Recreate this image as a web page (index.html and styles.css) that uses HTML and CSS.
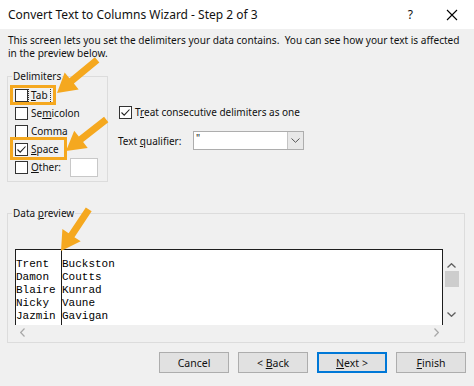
FILE: index.html
```html
<!doctype html>
<html lang="en">
<head>
    <meta charset="UTF-8">
    <title>Convert Text to Columns Wizard - Step 2 of 3</title>
    <link rel="stylesheet" href="styles.css">
</head>
<body>
<div class="window">
    <div class="titlebar">
        <span class="title">Convert Text to Columns Wizard - Step 2 of 3</span>
        <span class="help">?</span>
        <svg class="close" width="12" height="12" viewBox="0 0 12 12"><path d="M1 1L11 11M11 1L1 11" stroke="#000" stroke-width="1.1"/></svg>
    </div>

    <div class="body">
        <p class="intro">This screen lets you set the delimiters your data contains.&nbsp; You can see how your text is affected<br>in the preview below.</p>

        <div class="options">
            <div class="group delims">
                <span class="legend">Delimiters</span>
                <div class="row"><span class="box"></span><span class="focus"><u>T</u>ab</span></div>
                <div class="row"><span class="box"></span><span>Se<u>m</u>icolon</span></div>
                <div class="row"><span class="box"></span><span>Comma</span></div>
                <div class="row"><span class="box"><svg width="11" height="11" viewBox="0 0 11 11"><path d="M1.5 5.5L4.2 8.2L9.5 2.5" fill="none" stroke="#222" stroke-width="1.1"/></svg></span><span><u>S</u>pace</span></div>
                <div class="row"><span class="box"></span><span><u>O</u>ther:</span><span class="other"></span></div>
            </div>

            <div class="right">
                <div class="row"><span class="box"><svg width="11" height="11" viewBox="0 0 11 11"><path d="M1.5 5.5L4.2 8.2L9.5 2.5" fill="none" stroke="#222" stroke-width="1.1"/></svg></span><span>T<u>r</u>eat consecutive delimiters as one</span></div>
                <div class="qualifier">
                    <span class="qlabel">Text <u>q</u>ualifier:</span>
                    <div class="combo">
                        <span class="val">"</span>
                        <span class="drop"><svg width="9" height="5" viewBox="0 0 9 5"><path d="M0.5 0.5L4.5 4.3L8.5 0.5" fill="none" stroke="#555" stroke-width="1"/></svg></span>
                    </div>
                </div>
            </div>
        </div>

        <div class="group preview">
            <span class="legend">Data <u>p</u>review</span>
            <div class="pv-main">
                <div class="sheet">
                    <div class="col first">Trent<br>Damon<br>Blaire<br>Nicky<br>Jazmin</div>
                    <div class="col">Buckston<br>Coutts<br>Kunrad<br>Vaune<br>Gavigan</div>
                </div>
                <div class="vscroll">
                    <svg class="up" width="9" height="5" viewBox="0 0 9 5"><path d="M0.5 4.5L4.5 0.7L8.5 4.5" fill="none" stroke="#606060" stroke-width="1.3"/></svg>
                    <span class="thumb"></span>
                    <svg class="down" width="9" height="5" viewBox="0 0 9 5"><path d="M0.5 0.5L4.5 4.3L8.5 0.5" fill="none" stroke="#606060" stroke-width="1.3"/></svg>
                </div>
            </div>
            <div class="hscroll">
                <svg width="5" height="9" viewBox="0 0 5 9"><path d="M4.5 0.5L0.7 4.5L4.5 8.5" fill="none" stroke="#a8a8a8" stroke-width="1.2"/></svg>
                <svg width="5" height="9" viewBox="0 0 5 9"><path d="M0.5 0.5L4.3 4.5L0.5 8.5" fill="none" stroke="#a8a8a8" stroke-width="1.2"/></svg>
            </div>
        </div>

        <div class="buttons">
            <span class="btn"><span>Cancel</span></span>
            <span class="btn"><span>&lt; <u>B</u>ack</span></span>
            <span class="btn default"><span><u>N</u>ext &gt;</span></span>
            <span class="btn"><span><u>F</u>inish</span></span>
        </div>
    </div>

    <!-- annotations -->
    <div class="hl hl-tab"></div>
    <div class="hl hl-space"></div>
    <svg class="arrows" width="474" height="386" viewBox="0 0 474 386">
        <polygon points="-52,-3.5 -19,-3.5 -19,-11 0,0 -19,11 -19,3.5 -52,3.5" transform="translate(57 93) rotate(140.5)"/>
        <polygon points="-51,-3.5 -19,-3.5 -19,-11 0,0 -19,11 -19,3.5 -51,3.5" transform="translate(66 151) rotate(142)"/>
        <polygon points="-50,-3.5 -19,-3.5 -19,-11 0,0 -19,11 -19,3.5 -50,3.5" transform="translate(61 251) rotate(123.7)"/>
    </svg>
</div>
</body>
</html>
```

FILE: styles.css
```css
*{
    margin: 0;
    padding: 0;
    box-sizing: border-box;
}
body{
    font-family: "Noto Sans", "Liberation Sans", sans-serif;
    font-size: 10px;
    color: #111;
}
.window{
    position: relative;
    width: 474px;
    height: 386px;
    background: #f0f0f0;
    overflow: hidden;
}
.titlebar{
    height: 29px;
    background: #fff;
    display: flex;
    align-items: center;
    padding-left: 8px;
    font-size: 12px;
}
.titlebar .title{
    flex: 1;
}
.titlebar .help{
    margin-right: 33px;
    font-size: 12px;
}
.titlebar .close{
    margin-right: 16px;
}
.body{
    padding: 0 8px;
}
.intro{
    margin-top: 5px;
    font-size: 10.1px;
    line-height: 13px;
    white-space: nowrap;
}
.options{
    display: flex;
    margin-top: 10px;
}
.group{
    border: 1px solid #dcdcdc;
}
.legend{
    display: block;
    width: fit-content;
    line-height: 13px;
    background: #f0f0f0;
    padding: 0 1px;
}
.delims{
    margin: 6px 0 0 -1px;
    width: 101px;
    height: 106px;
    padding-left: 7px;
}
.delims .legend{
    margin: -7px 0 3px -3px;
}
.row{
    display: flex;
    align-items: center;
    height: 18px;
}
.box{
    width: 13px;
    height: 13px;
    border: 1px solid #333;
    background: #fff;
    margin-right: 3px;
    display: flex;
    align-items: center;
    justify-content: center;
}
.focus{
    outline: 1px dotted #333;
    outline-offset: 1px;
    padding: 0 1px;
    margin-left: -1px;
}
.other{
    width: 28px;
    height: 19px;
    margin-left: 9px;
    background: #fff;
    border: 1px solid #c8c8c8;
}
.right{
    margin-left: 10px;
    padding-top: 33px;
}
.right .row .box{
    margin-left: 1px;
}
.qualifier{
    display: flex;
    align-items: center;
    margin-top: 10px;
}
.qlabel{
    width: 75px;
}
.combo{
    display: flex;
    width: 111px;
    height: 19px;
    background: #fff;
    border: 1px solid #adadad;
}
.combo .val{
    flex: 1;
    padding-left: 2px;
    line-height: 12px;
}
.combo .drop{
    width: 16px;
    background: #e8e8e8;
    border-left: 1px solid #c4c4c4;
    display: flex;
    align-items: center;
    justify-content: center;
}
.preview{
    margin: 31px 1px 0 -1px;
    padding: 0 4px 2px 7px;
}
.preview .legend{
    margin: -7px 0 29px -3px;
}
.pv-main{
    display: flex;
}
.sheet{
    flex: 1;
    display: flex;
    height: 76px;
    background: #fff;
    border: 1px solid #1e1e1e;
    border-bottom: none;
    font-family: "Liberation Mono", monospace;
    font-size: 11px;
    line-height: 13px;
    color: #000;
}
.col{
    padding-top: 8px;
}
.col.first{
    width: 46px;
    border-right: 1px solid #1e1e1e;
}
.vscroll{
    width: 17px;
    display: flex;
    flex-direction: column;
    align-items: center;
}
.vscroll .up{
    margin-top: 14px;
}
.vscroll .thumb{
    margin-top: 3px;
    width: 14px;
    height: 16px;
    background: #cdcdcd;
}
.vscroll .down{
    margin-top: auto;
    margin-bottom: 8px;
}
.hscroll{
    height: 15px;
    display: flex;
    align-items: center;
    justify-content: space-between;
    padding: 0 21px 0 5px;
}
.buttons{
    display: flex;
    justify-content: flex-end;
    gap: 9px;
    margin-top: 9px;
}
.btn{
    width: 70px;
    height: 21px;
    display: flex;
    align-items: center;
    justify-content: center;
    background: #e1e1e1;
    border: 1px solid #adadad;
    font-size: 10.5px;
}
.btn.default{
    border: 2px solid #0078d7;
}
.hl{
    position: absolute;
    border: 3px solid #f5a81f;
}
.hl-tab{
    left: 10px;
    top: 85px;
    width: 46px;
    height: 20px;
}
.hl-space{
    left: 10px;
    top: 137px;
    width: 57px;
    height: 23px;
}
.arrows{
    position: absolute;
    left: 0;
    top: 0;
    fill: #f5a81f;
}
```
